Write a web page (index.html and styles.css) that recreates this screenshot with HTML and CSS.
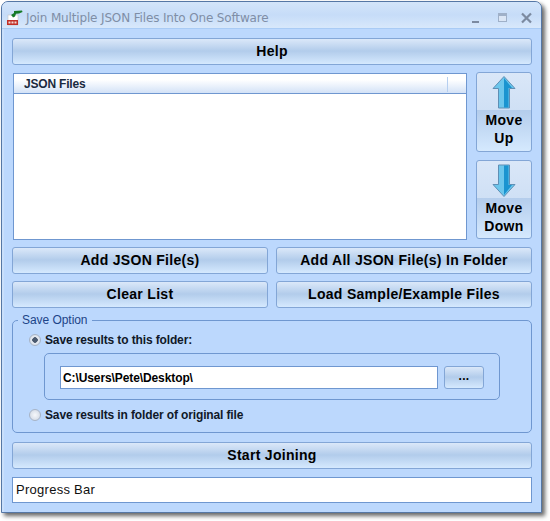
FILE: index.html
```html
<!DOCTYPE html>
<html lang="en">
<head>
<meta charset="utf-8">
<title>Join Multiple JSON Files Into One Software</title>
<link rel="stylesheet" href="styles.css">
</head>
<body>
<div class="window">
  <header class="titlebar">
    <svg class="app-icon" width="17" height="16" viewBox="0 0 17 16">
      <rect x="2" y="5" width="10" height="10" fill="#fff" stroke="#c3c3c3" stroke-width=".6"/>
      <rect x="1" y="10" width="11" height="5" fill="#c22f26"/>
      <path d="M2.500 11.500h2v2h-2zM5.500 11.500h2v2h-2zM8.500 11.500h2v2h-2z" fill="#f4d6d2"/>
      <path d="M5 5 L8 3 L8 1 L16 .5 L16.500 2 L13 3.500 L10 3.800 L9 6.500 L7 7.500 L6 6 Z" fill="#157a26"/>
    </svg>
    <span class="title-text">Join Multiple JSON Files Into One Software</span>
    <div class="win-controls">
      <svg width="16" height="12" viewBox="0 0 16 12"><rect x="1" y="9" width="7" height="2" fill="#7c8aa0"/></svg>
      <svg width="16" height="12" viewBox="0 0 16 12"><rect x="3.500" y="1.500" width="8" height="8" fill="#dbe6f5" stroke="#9fb0c8"/><rect x="3" y="1" width="9" height="3" fill="#9fb0c8"/></svg>
      <svg width="16" height="12" viewBox="0 0 16 12"><path d="M3 1.500 L12 10.500 M12 1.500 L3 10.500" stroke="#7c8aa0" stroke-width="2.200" fill="none"/></svg>
    </div>
  </header>
  <main class="client">
    <button class="btn btn-wide">Help</button>
    <section class="list-row">
      <div class="listbox">
        <div class="list-head"><span class="list-col">JSON Files</span></div>
      </div>
      <div class="side">
        <button class="btn btn-move">
          <svg width="24" height="33" viewBox="0 0 24 33">
            <path d="M12 .5 L23 12.500 H17.500 V32 H6.500 V12.500 H1 Z" fill="#6cc6ec" stroke="#5f8fb5"/>
            <path d="M12 2 L20 12 H16.500 V31.500 H12 Z" fill="#1a94d0"/>
          </svg>
          <span>Move<br>Up</span>
        </button>
        <button class="btn btn-move">
          <svg width="24" height="33" viewBox="0 0 24 33">
            <path d="M12 32.500 L23 20.500 H17.500 V1 H6.500 V20.500 H1 Z" fill="#6cc6ec" stroke="#5f8fb5"/>
            <path d="M12 31 L20 21 H16.500 V1.500 H12 Z" fill="#1a94d0"/>
          </svg>
          <span>Move<br>Down</span>
        </button>
      </div>
    </section>
    <section class="action-grid">
      <button class="btn">Add JSON File(s)</button>
      <button class="btn">Add All JSON File(s) In Folder</button>
      <button class="btn">Clear List</button>
      <button class="btn">Load Sample/Example Files</button>
    </section>
    <fieldset class="group">
      <legend>Save Option</legend>
      <label class="radio-line"><span class="radio radio-on"></span>Save results to this folder:</label>
      <div class="folder-box">
        <div class="path-input">C:\Users\Pete\Desktop\</div>
        <button class="btn btn-browse">...</button>
      </div>
      <label class="radio-line radio-line-2"><span class="radio"></span>Save results in folder of original file</label>
    </fieldset>
    <button class="btn btn-wide btn-start">Start Joining</button>
    <div class="progress">Progress Bar</div>
  </main>
</div>
</body>
</html>
```
FILE: styles.css
```css
* { box-sizing: border-box; }
html, body { margin: 0; padding: 0; background: #fff; }
body { width: 550px; height: 521px; padding: 1px 0 0 1px; font-family: "Liberation Sans", Arial, sans-serif; color: #000; overflow: hidden; }
.window {
  width: 541px; height: 512px;
  background: #bcd8fd;
  border: 1px solid #5577a5;
  border-radius: 7px 7px 0 0;
  box-shadow: 3px 3px 4px rgba(0,0,0,.6);
  display: flex; flex-direction: column;
}
.titlebar {
  height: 27px; flex: none;
  padding: 6px 6px 0 4px;
  display: flex; align-items: center; gap: 3px;
  background: linear-gradient(#d3e5fa, #c6dcf8 50%, #d8e8fb);
  border-bottom: 1px solid #a9cbf5;
  border-radius: 6px 6px 0 0;
}
.app-icon { flex: none; }
.title-text { font-family: "DejaVu Sans", sans-serif; font-size: 12px; color: #7f8ea6; flex: 1; white-space: nowrap; letter-spacing: -.15px; }
.win-controls { display: flex; gap: 8px; margin-right: 0; }
.client {
  flex: 1;
  padding: 9px 9px 0 8px;
  display: flex; flex-direction: column;
  border-left: 2px solid #c9dffb;
}
.btn {
  display: block; padding: 0 0 2px;
  font: bold 14px "Liberation Sans", Arial, sans-serif;
  letter-spacing: .3px;
  color: #000;
  height: 27px;
  border: 1px solid #83a6d6;
  border-radius: 3px;
  background: linear-gradient(#dbe8f9, #b2cceb 48%, #d5e9fe);
}
.btn-wide { width: 100%; flex: none; }
.list-row { display: flex; justify-content: space-between; align-items: flex-start; margin-top: 7px; height: 168px; flex: none; }
.listbox { width: 454px; height: 167px; margin: 1px 0 0 1px; background: #fff; border: 1px solid #6f97d0; }
.list-head { height: 20px; padding: 3px 18px 0 10px; background: linear-gradient(#fff, #fff 30%, #d3e2f7 100%); border-bottom: 1px solid #6f97d0; }
.list-col { display: block; font-size: 12px; font-weight: bold; color: #1a2a40; border-right: 1px solid #b6cff0; line-height: 15px; height: 15px; letter-spacing: -.2px; }
.side { width: 56px; height: 167px; display: flex; flex-direction: column; gap: 8px; }
.btn-move {
  flex: 1; height: auto;
  background: linear-gradient(#dae7f8, #cfe0f5 48%, #b4cdec 48%, #d5e9fe);
  display: flex; flex-direction: column; align-items: center;
  padding: 3px 0 0; line-height: 18px;
}
.btn-move svg { flex: none; margin-bottom: 2px; }
.btn-move span { display: block; }
.action-grid { display: grid; grid-template-columns: 256px 256px; column-gap: 8px; row-gap: 7px; margin-top: 7px; flex: none; }
.group { margin: 5px 0 0; padding: 0; height: 120px; flex: none; border: 1px solid #6f97d0; border-radius: 5px; min-width: 0; }
.group legend { margin-left: 5px; padding: 0 4px; font-size: 12px; color: #1c4488; letter-spacing: -.05px; line-height: 14px; }
.radio-line { display: flex; align-items: center; gap: 4px; margin: 6px 0 0 16px; font-size: 12px; font-weight: bold; color: #101828; height: 14px; letter-spacing: -.13px; }
.radio { width: 12px; height: 12px; border-radius: 50%; border: 1px solid #a8b4c6; background: radial-gradient(#f6f8fb, #ccd5e2); flex: none; }
.radio-on { background: radial-gradient(#4b5a70 0, #4b5a70 2.500px, #e6ebf2 3px, #ccd5e2); }
.folder-box { margin: 6px 31px 0 31px; height: 47px; border: 1px solid #6f97d0; border-radius: 5px; display: flex; align-items: center; padding: 1px 0 0 15px; gap: 6px; }
.path-input { width: 378px; height: 23px; background: #fff; border: 1px solid #6f97d0; padding-left: 2px; font-size: 12px; font-weight: bold; line-height: 22px; letter-spacing: -.1px; }
.btn-browse { width: 40px; height: 23px; font-size: 12px; }
.radio-line-2 { margin-top: 8px; }
.btn-start { margin-top: 9px; }
.progress { margin-top: 8px; height: 26px; flex: none; background: #fff; border: 1px solid #6f97d0; padding-left: 3px; font-size: 13px; line-height: 24px; color: #101010; letter-spacing: .27px; }
```
